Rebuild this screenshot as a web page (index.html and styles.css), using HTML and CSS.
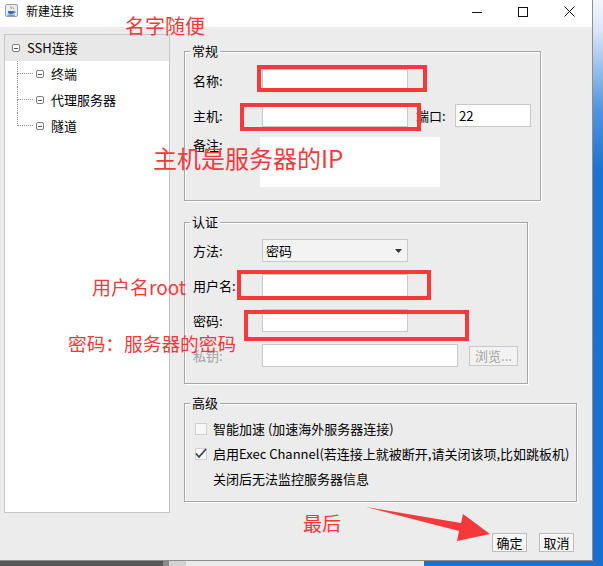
FILE: index.html
```html
<!DOCTYPE html>
<html lang="zh-CN">
<head>
<meta charset="utf-8">
<title>新建连接</title>
<link rel="stylesheet" href="styles.css">
</head>
<body>
<div class="screen">
  <div class="main">
    <div class="window">
      <div class="titlebar">
        <svg class="appicon" viewBox="0 0 13 13" width="13" height="13">
          <rect x="0.5" y="0.5" width="12" height="12" rx="1.5" fill="#e9eef5" stroke="#8ea3bf"/>
          <path d="M6 2.2c-1.2 1 1 1.8 0 3M8.2 3c-1 .8.8 1.3 0 2.3" stroke="#e2731d" stroke-width="1" fill="none"/>
          <path d="M3 7h6v1.3c0 1.2-1.2 2-3 2s-3-.8-3-2z" fill="#3c6fae"/>
          <path d="M9 7.4h.8c.6 0 .6 1.4 0 1.4H9" stroke="#3c6fae" stroke-width=".8" fill="none"/>
          <path d="M2.4 11.2h7.4" stroke="#3c6fae" stroke-width="1"/>
        </svg>
        <span class="title">新建连接</span>
        <div class="controls">
          <span class="ctl"><svg width="10" height="10" viewBox="0 0 10 10"><path d="M0 5.5h10" stroke="#111" stroke-width="1"/></svg></span>
          <span class="ctl"><svg width="10" height="10" viewBox="0 0 10 10"><rect x="0.5" y="0.5" width="9" height="9" fill="none" stroke="#111" stroke-width="1"/></svg></span>
          <span class="ctl"><svg width="11" height="11" viewBox="0 0 11 11"><path d="M0.5 0.5L10.5 10.5M10.5 0.5L0.5 10.5" stroke="#111" stroke-width="1"/></svg></span>
        </div>
      </div>
      <div class="body">
        <div class="tree">
          <div class="node-root"><span class="tgl"><span class="minus"></span></span><span class="tlabel">SSH连接</span></div>
          <div class="child"><span class="conn"><span class="up"></span><span class="down"></span></span><span class="tgl"><span class="minus"></span></span><span class="tlabel">终端</span></div>
          <div class="child"><span class="conn"><span class="up"></span><span class="down"></span></span><span class="tgl"><span class="minus"></span></span><span class="tlabel">代理服务器</span></div>
          <div class="child last"><span class="conn"><span class="up"></span><span class="down"></span></span><span class="tgl"><span class="minus"></span></span><span class="tlabel">隧道</span></div>
        </div>
        <div class="col">
          <fieldset class="grp g1">
            <legend>常规</legend>
            <div class="row"><span class="lbl">名称:</span><input class="inp w146" type="text" value=""></div>
            <div class="row r2"><span class="lbl">主机:</span><input class="inp w146" type="text" value=""><span class="plbl">端口:</span><input class="inp w76" type="text" value="22"></div>
            <div class="row r3 top"><span class="lbl">备注:</span><div class="memo"></div></div>
          </fieldset>
          <fieldset class="grp g2">
            <legend>认证</legend>
            <div class="row"><span class="lbl">方法:</span><div class="select"><span>密码</span><svg width="7" height="4" viewBox="0 0 7 4"><path d="M0 0h7L3.5 4z" fill="#333"/></svg></div></div>
            <div class="row r12"><span class="lbl">用户名:</span><input class="inp w146" type="text" value=""></div>
            <div class="row r12"><span class="lbl">密码:</span><input class="inp w146" type="password" value=""></div>
            <div class="row r12"><span class="lbl dis">私钥:</span><input class="inp w196" type="text" value="" disabled><span class="browse">浏览...</span></div>
          </fieldset>
          <fieldset class="grp g3">
            <legend>高级</legend>
            <div class="crow"><span class="ck"></span><span>智能加速 (加速海外服务器连接)</span></div>
            <div class="crow"><span class="ck on"><svg width="12" height="11" viewBox="0 0 12 11"><path d="M1 5.5l3 3.5L11 1" stroke="#35414f" stroke-width="1.7" fill="none"/></svg></span><span>启用Exec Channel(若连接上就被断开,请关闭该项,比如跳板机)</span></div>
            <div class="crow note3">关闭后无法监控服务器信息</div>
          </fieldset>
          <div class="buttons"><span class="btn">确定</span><span class="btn">取消</span></div>
        </div>
      </div>
    </div>
    <div class="desk-right"></div>
  </div>
  <div class="taskbar"><span class="t1"></span><span class="t2"></span><span class="t3"></span><span class="t4"></span><span class="t5"></span></div>

  <div class="annot">
    <div class="rbox b1"></div>
    <div class="rbox b2"></div>
    <div class="rbox b3"></div>
    <div class="rbox b4"></div>
    <div class="note n1">名字随便</div>
    <div class="note n2">主机是服务器的IP</div>
    <div class="note n3">用户名root</div>
    <div class="note n4">密码：服务器的密码</div>
    <div class="note n5">最后</div>
    <svg class="arrow" width="603" height="566" viewBox="0 0 603 566"><polygon points="366,507 461,523 463,514 490,534 457,541 459,531" fill="#f4393c"/></svg>
  </div>
</div>
</body>
</html>
```
FILE: styles.css
```css
* { box-sizing: border-box; }
html, body { margin: 0; padding: 0; }
body {
  width: 603px;
  height: 566px;
  overflow: hidden;
  font-family: "Noto Sans CJK SC", "Noto Sans", sans-serif;
  font-size: 13px;
  line-height: 16px;
  color: #000;
  background: #1c71cf;
}
.screen { position: relative; width: 603px; height: 566px; }
.main { display: flex; height: 561px; }
.window {
  width: 593px;
  height: 561px;
  background: #ececec;
  border-right: 1px solid #8e8e8e;
  border-bottom: 1px solid #8e8e8e;
  display: flex;
  flex-direction: column;
  flex: none;
}
.desk-right {
  flex: 1;
  background: linear-gradient(#f4f7fb 0, #dbe7f5 30px, #4f95df 110px, #1d72d1 170px, #1a6ecf 100%);
}
.taskbar { display: flex; height: 5px; }
.taskbar span { display: block; height: 5px; }
.t1 { width: 163px; background: #575757; }
.t2 { width: 6px; background: #8a8a8a; }
.t3 { width: 17px; background: #d3d3d3; }
.t4 { width: 238px; background: #ebebeb; }
.t5 { flex: 1; background: #1b6fce; }

/* title bar */
.titlebar { height: 27px; flex: none; background: #fff; display: flex; align-items: flex-start; }
.appicon { margin: 4px 0 0 5px; flex: none; }
.title { margin: 4px 0 0 8px; font-size: 12px; line-height: 13px; color: #000; }
.controls { margin-left: auto; display: flex; }
.ctl { width: 46px; height: 23px; display: flex; align-items: center; justify-content: center; }

/* body */
.body { flex: 1; display: flex; align-items: flex-start; padding: 7px 0 0 4px; }

.tree {
  width: 166px;
  height: 479px;
  flex: none;
  background: #fff;
  border: 1px solid #c6c6c6;
}
.node-root { height: 26px; display: flex; align-items: center; background: #e8e8e8; padding-left: 7px; }
.child { height: 26px; display: flex; align-items: center; }
.tgl {
  width: 8px; height: 8px; flex: none;
  border: 1px solid #7d7d7d; border-radius: 2px;
  display: flex; align-items: center; justify-content: center;
  background: #fff;
}
.minus { width: 4px; height: 1px; background: #555; }
.node-root .tgl { margin-right: 7px; }
.child .tgl { margin-right: 7px; }
.tlabel { font-size: 13px; line-height: 16px; white-space: nowrap; }
.conn { width: 16px; align-self: stretch; margin-left: 12px; margin-right: 3px; display: flex; flex-direction: column; }
.conn .up { height: 13px; border-left: 1px dotted #8a8a8a; border-bottom: 1px dotted #8a8a8a; }
.conn .down { flex: 1; border-left: 1px dotted #8a8a8a; }
.child.last .down { border-left: none; }

/* right column */
.col { margin-left: 14px; margin-top: 9px; width: 393px; flex: none; display: flex; flex-direction: column; align-items: flex-start; }
.grp {
  margin: 0;
  min-inline-size: 0;
  border: 1px solid #a6a6a6;
  box-shadow: 1px 1px 0 #fff, inset 1px 1px 0 #fff;
  padding: 0 8px;
}
.grp legend { margin-left: -3px; padding: 0 2px; font-size: 13px; line-height: 16px; background: #ececec; }
.g1 { width: 357px; padding-top: 10px; padding-bottom: 13px; }
.g2 { width: 344px; margin-top: 13px; padding-top: 9px; padding-bottom: 16px; }
.g3 { width: 393px; margin-top: 11px; padding-top: 5px; padding-bottom: 10px; }

.row { display: flex; align-items: center; }
.row.top { align-items: flex-start; }
.r2 { margin-top: 12px; }
.r3 { margin-top: 10px; }
.r12 { margin-top: 12px; }
.lbl { width: 69px; flex: none; line-height: 16px; white-space: nowrap; }
.lbl.dis { color: #a3a3a3; }
.inp {
  height: 23px; margin: 0; padding: 0 3px;
  border: 1px solid #c8c8c8; background: #fff;
  font: 13px "Noto Sans CJK SC", "Noto Sans", sans-serif;
  color: #000; outline: none; flex: none;
}
.inp:disabled { background: #fff; }
.w146 { width: 146px; }
.w76 { width: 76px; }
.w196 { width: 196px; }
.plbl { margin-left: 8px; width: 39px; flex: none; white-space: nowrap; }
.memo { width: 180px; height: 50px; margin-left: -2px; background: #fff; }
.select {
  width: 146px; height: 23px; flex: none;
  border: 1px solid #c8c8c8; background: #f3f3f3;
  display: flex; align-items: center; justify-content: space-between;
  padding: 0 5px 0 3px;
}
.browse {
  margin-left: 11px; width: 49px; height: 20px; flex: none;
  border: 1px solid #c8c8c8; background: #f2f2f2;
  color: #a3a3a3; font-size: 13px; line-height: 18px; text-align: center;
}
.crow { height: 25px; display: flex; align-items: center; white-space: nowrap; }
.ck {
  width: 12px; height: 12px; flex: none;
  margin-left: 2px; margin-right: 6px;
  border: 1px solid #d0d0d0; background: #f7f7f7;
  display: flex; align-items: center; justify-content: center; overflow: visible;
}
.ck svg { flex: none; }
.note3 { padding-left: 20px; }

.buttons { align-self: stretch; display: flex; justify-content: flex-end; gap: 12px; margin-top: 31px; padding-right: 3px; }
.btn {
  width: 35px; height: 19px;
  border: 1px solid #bdbdbd; background: #f6f6f6;
  font-size: 13px; line-height: 17px; text-align: center;
}

/* annotations overlay */
.annot { position: absolute; left: 0; top: 0; width: 603px; height: 566px; pointer-events: none; }
.rbox { position: absolute; border: 4px solid #f8393c; }
.b1 { left: 257px; top: 65px; width: 170px; height: 27px; }
.b2 { left: 240px; top: 103px; width: 181px; height: 28px; }
.b3 { left: 237px; top: 270px; width: 194px; height: 30px; }
.b4 { left: 244px; top: 310px; width: 225px; height: 31px; }
.note { position: absolute; color: #f4393c; line-height: 1; white-space: nowrap; font-family: "Noto Sans CJK SC", "Noto Sans", sans-serif; }
.n1 { left: 125px; top: 16px; font-size: 20px; }
.n2 { left: 153px; top: 146px; font-size: 24px; }
.n3 { left: 92px; top: 277px; font-size: 19px; }
.n4 { left: 68px; top: 334px; font-size: 18.7px; }
.n5 { left: 303px; top: 513px; font-size: 19px; }
.arrow { position: absolute; left: 0; top: 0; }
```
